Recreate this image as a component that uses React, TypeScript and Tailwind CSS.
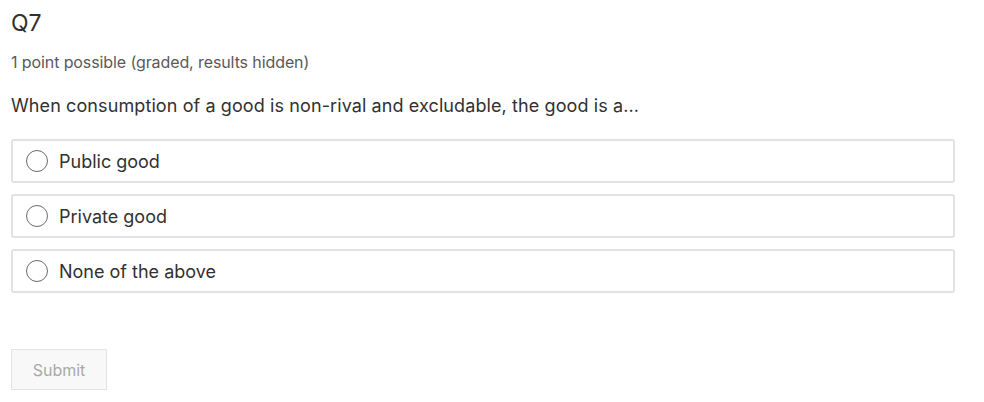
const OPTIONS = ["Public good", "Private good", "None of the above"];

export default function App() {
  return (
    <div
      className="bg-white w-[984px] h-[402px] px-[11px] pt-[8px] text-[#333]"
      style={{ fontFamily: "Inter, 'Noto Sans', sans-serif" }}
    >
      <h3 className="text-[23px] leading-[30px] font-normal text-[#313131]">Q7</h3>
      <p className="mt-[12px] text-[16px] leading-[24px] tracking-[-0.1px] text-[#5a5a5a]">
        1 point possible (graded, results hidden)
      </p>
      <p className="mt-[18px] text-[18px] leading-[27px] tracking-[0.1px] text-[#313131]">
        When consumption of a good is non-rival and excludable, the good is a...
      </p>

      <div className="mt-[20px] w-[944px] flex flex-col gap-[11px]">
        {OPTIONS.map((label) => (
          <label
            key={label}
            className="flex items-center h-[44px] border-2 border-[#e2e2e2] rounded-[3px] pl-[13px] gap-[11px] cursor-pointer"
          >
            <span className="w-[22px] h-[22px] rounded-full border border-[#6b6b6b] bg-white shrink-0" />
            <span className="text-[18px] text-[#313131]">{label}</span>
          </label>
        ))}
      </div>

      <button
        disabled
        className="mt-[56px] w-[96px] h-[41px] bg-[#f8f8f8] border border-[#e3e3e3] text-[16px] text-[#a9a9a9]"
      >
        Submit
      </button>
    </div>
  );
}
